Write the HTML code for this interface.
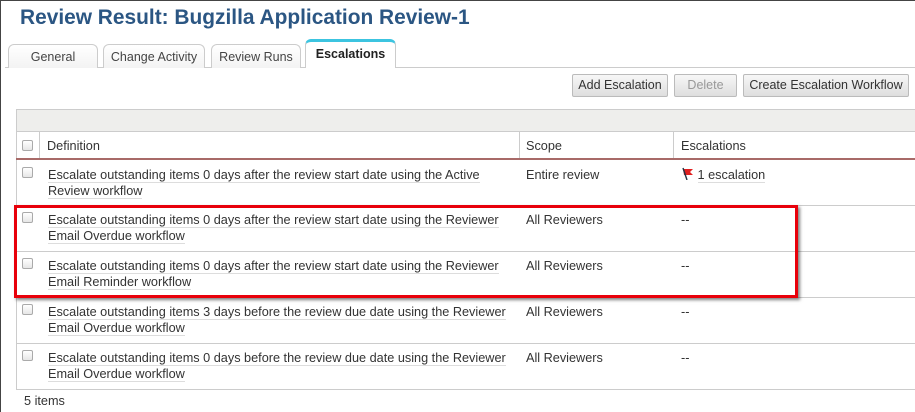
<!DOCTYPE html>
<html><head><style>
*{margin:0;padding:0;box-sizing:border-box}
body{width:915px;height:412px;background:#fff;font-family:"Liberation Sans",sans-serif;color:#333;position:relative;overflow:hidden;border-left:1px solid #444;border-top:1px solid #444}
.a{position:absolute}
h1{position:absolute;left:19px;top:5px;font-size:20.9px;font-weight:bold;color:#2b5683;white-space:nowrap}
.tab{position:absolute;top:43px;height:24px;border:1px solid #ccc;border-bottom:none;border-radius:6px 6px 0 0;background:linear-gradient(#fff,#f3f3f3);font-size:12.5px;text-align:center;line-height:24px;color:#444}
.tab.on{top:38px;height:29px;border-top:3px solid #3cc4e0;background:#fff;font-weight:bold;color:#222;line-height:24px}
.btn{position:absolute;top:73px;height:23px;border:1px solid #bbb;border-radius:2px;background:linear-gradient(#f7f7f7,#dedede);font-size:12.5px;text-align:center;line-height:21px;color:#333}
.t{font-size:12.7px;line-height:16px;white-space:nowrap}
.u{border-bottom:1px solid #ddd}
.cb{position:absolute;left:21px;width:11px;height:11px;border:1px solid #aaa;border-radius:2px;background:linear-gradient(#fff,#e6e6e6)}
.hl{position:absolute;left:15px;right:0;height:1px;background:#ccc}
</style></head><body>
<h1>Review Result: Bugzilla Application Review-1</h1>
<div class="a" style="left:4px;top:66px;width:911px;height:1px;background:#ccc"></div>
<div class="tab" style="left:7px;width:90px">General</div>
<div class="tab" style="left:102px;width:102px">Change Activity</div>
<div class="tab" style="left:210px;width:90px">Review Runs</div>
<div class="tab on" style="left:304px;width:91px">Escalations</div>
<div class="btn" style="left:571px;width:96px">Add Escalation</div>
<div class="btn" style="left:673px;width:63px;color:#999">Delete</div>
<div class="btn" style="left:742px;width:166px">Create Escalation Workflow</div>
<div class="a" style="left:15px;top:108px;width:900px;height:23px;background:#eeeeec;border:1px solid #ccc;border-right:none"></div>
<div class="a" style="left:15px;top:131px;width:1px;height:258px;background:#ccc"></div>
<div class="a" style="left:38px;top:131px;width:1px;height:27px;background:#ccc"></div>
<div class="a" style="left:518px;top:131px;width:1px;height:27px;background:#ccc"></div>
<div class="a" style="left:672px;top:131px;width:1px;height:27px;background:#ccc"></div>
<div class="cb" style="top:139px"></div>
<div class="a t" style="left:46px;top:137px;font-size:12.7px">Definition</div>
<div class="a t" style="left:525px;top:137px;font-size:12.7px">Scope</div>
<div class="a t" style="left:680px;top:137px;font-size:12.7px">Escalations</div>
<div class="a" style="left:15px;top:157px;width:900px;height:2px;background:#a86a68"></div>

<div class="cb" style="top:166px"></div>
<div class="a t" style="left:47px;top:166px"><span class="u">Escalate outstanding items 0 days after the review start date using the Active</span><br><span class="u">Review workflow</span></div>
<div class="a t" style="left:525px;top:166px">Entire review</div>
<div class="a t" style="left:680px;top:166px"><svg width="13" height="13" style="vertical-align:-1px"><path d="M2 2 L12 2 L9 5 L12 8 L3 8 Z" fill="#e02020"/><line x1="2" y1="1" x2="6" y2="13" stroke="#234" stroke-width="1.4"/></svg> <span class="u">1 escalation</span></div>
<div class="hl" style="top:204px"></div>

<div class="cb" style="top:211px"></div>
<div class="a t" style="left:47px;top:211px"><span class="u">Escalate outstanding items 0 days after the review start date using the Reviewer</span><br><span class="u">Email Overdue workflow</span></div>
<div class="a t" style="left:525px;top:211px">All Reviewers</div>
<div class="a t" style="left:680px;top:211px">--</div>
<div class="hl" style="top:250px"></div>

<div class="cb" style="top:257px"></div>
<div class="a t" style="left:47px;top:257px"><span class="u">Escalate outstanding items 0 days after the review start date using the Reviewer</span><br><span class="u">Email Reminder workflow</span></div>
<div class="a t" style="left:525px;top:257px">All Reviewers</div>
<div class="a t" style="left:680px;top:257px">--</div>
<div class="hl" style="top:296px"></div>

<div class="cb" style="top:303px"></div>
<div class="a t" style="left:47px;top:303px"><span class="u">Escalate outstanding items 3 days before the review due date using the Reviewer</span><br><span class="u">Email Overdue workflow</span></div>
<div class="a t" style="left:525px;top:303px">All Reviewers</div>
<div class="a t" style="left:680px;top:303px">--</div>
<div class="hl" style="top:342px"></div>

<div class="cb" style="top:349px"></div>
<div class="a t" style="left:47px;top:349px"><span class="u">Escalate outstanding items 0 days before the review due date using the Reviewer</span><br><span class="u">Email Overdue workflow</span></div>
<div class="a t" style="left:525px;top:349px">All Reviewers</div>
<div class="a t" style="left:680px;top:349px">--</div>
<div class="hl" style="top:388px"></div>

<div class="a t" style="left:23px;top:392px">5 items</div>

<div class="a" style="left:13px;top:204px;width:784px;height:93px;border:3px solid #e8000a;box-shadow:2px 2px 3px rgba(0,0,0,.5)"></div>
</body></html>
